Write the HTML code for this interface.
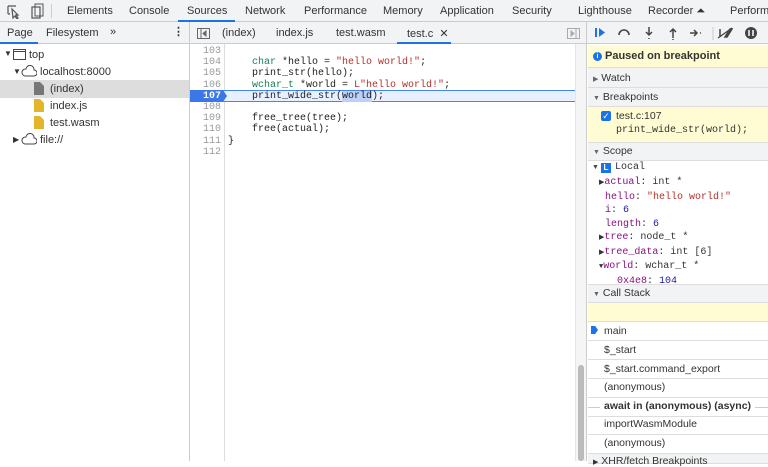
<!DOCTYPE html><html><head><style>
*{margin:0;padding:0;box-sizing:border-box}
body{width:768px;height:461px;overflow:hidden;background:#fff;font-family:"Liberation Sans",sans-serif;font-size:11px;color:#333;position:relative}
.a{position:absolute}
.mono{font-family:"Liberation Mono",monospace;font-size:10px}
.tab{position:absolute;top:5px;font-size:11px;color:#333}
.row{position:absolute;left:588px;width:180px;border-bottom:1px solid #ddd}
.hdr{background:#f1f3f4;color:#333}
.cs{position:absolute;left:604px;font-size:10.5px}
</style></head><body>
<div class="a" style="left:0;top:0;width:768px;height:22px;background:#f1f3f4;border-bottom:1px solid #ccc"></div>
<svg class="a" style="left:5px;top:3px" width="40" height="16"><path d="M3 3h8M3 3v8M3 11h2M7 6l6 6-2 0 2 3-1 1-2-3-2 2z" fill="none" stroke="#555" stroke-width="1.2"/><rect x="27" y="4" width="8" height="11" fill="none" stroke="#555" stroke-width="1.2"/><rect x="30" y="1" width="8" height="12" fill="none" stroke="#555" stroke-width="1"/></svg>
<div class="a" style="left:51px;top:4px;width:1px;height:14px;background:#ccc"></div>
<div class="tab" style="left:67px">Elements</div><div class="tab" style="left:129px">Console</div><div class="tab" style="left:187px">Sources</div><div class="tab" style="left:245px">Network</div><div class="tab" style="left:304px">Performance</div><div class="tab" style="left:383px">Memory</div><div class="tab" style="left:440px">Application</div><div class="tab" style="left:512px">Security</div><div class="tab" style="left:578px">Lighthouse</div><div class="tab" style="left:648px">Recorder ⏶</div><div class="tab" style="left:730px">Performa</div>
<div class="a" style="left:178px;top:20px;width:57px;height:2px;background:#1a73e8"></div>
<div class="a" style="left:0;top:22px;width:587px;height:22px;background:#f1f3f4;border-bottom:1px solid #ccc"></div>
<div class="tab" style="left:7px;top:27px">Page</div><div class="tab" style="left:46px;top:27px">Filesystem</div><div class="tab" style="left:110px;top:26px">»</div><div class="tab" style="left:173px;top:25px;font-weight:bold">⋮</div>
<div class="a" style="left:0;top:42px;width:38px;height:2px;background:#1a73e8"></div>
<div class="a" style="left:189px;top:22px;width:1px;height:439px;background:#ccc"></div>
<svg class="a" style="left:197px;top:28px" width="14" height="11"><rect x=".5" y=".5" width="12" height="10" fill="none" stroke="#666"/><path d="M4 1v9M9 3v5l-3-2.5z" stroke="#666" fill="#666"/></svg>
<div class="tab" style="left:222px;top:27px">(index)</div><div class="tab" style="left:276px;top:27px">index.js</div><div class="tab" style="left:336px;top:27px">test.wasm</div><div class="tab" style="left:407px;top:27px">test.c&nbsp; ✕</div>
<div class="a" style="left:397px;top:42px;width:54px;height:2px;background:#1a73e8"></div>
<svg class="a" style="left:567px;top:28px" width="13" height="11"><rect x=".5" y=".5" width="12" height="10" fill="none" stroke="#aaa"/><path d="M9 1v9M4 3v5l3-2.5z" stroke="#aaa" fill="#aaa"/></svg>
<div class="a" style="left:0;top:80px;width:189px;height:18px;background:#ddd"></div>
<div class="a" style="left:4px;top:49px;font-size:8px">▼</div><svg class="a" style="left:13px;top:49px" width="13" height="11"><rect x=".5" y=".5" width="12" height="10" fill="none" stroke="#444"/><path d="M1 2.5h11" stroke="#444"/></svg><div class="a" style="left:29px;top:49px">top</div>
<div class="a" style="left:13px;top:67px;font-size:8px">▼</div><svg class="a" style="left:21px;top:65px" width="16" height="12"><path d="M4 11h9a3 3 0 0 0 0-6 4 4 0 0 0-8-1 3.5 3.5 0 0 0-1 7z" fill="none" stroke="#444"/></svg><div class="a" style="left:40px;top:66px">localhost:8000</div>
<svg class="a" style="left:34px;top:82px" width="10" height="13"><path d="M0 0h6l4 4v9H0z" fill="#777"/></svg><div class="a" style="left:50px;top:83px">(index)</div>
<svg class="a" style="left:34px;top:99px" width="10" height="13"><path d="M0 0h6l4 4v9H0z" fill="#e3b52b"/></svg><div class="a" style="left:50px;top:100px">index.js</div>
<svg class="a" style="left:34px;top:116px" width="10" height="13"><path d="M0 0h6l4 4v9H0z" fill="#e3b52b"/></svg><div class="a" style="left:50px;top:117px">test.wasm</div>
<div class="a" style="left:13px;top:135px;font-size:8px">▶</div><svg class="a" style="left:21px;top:133px" width="16" height="12"><path d="M4 11h9a3 3 0 0 0 0-6 4 4 0 0 0-8-1 3.5 3.5 0 0 0-1 7z" fill="none" stroke="#444"/></svg><div class="a" style="left:40px;top:134px">file://</div>
<div class="a" style="left:224px;top:44px;width:1px;height:417px;background:#ddd"></div>
<div class="a" style="left:190px;top:90px;width:385px;height:12px;background:#e8f0fe;border-top:1px solid #4285f4;border-bottom:1px solid #4285f4"></div>
<svg class="a" style="left:190px;top:90px" width="40" height="12"><path d="M0 0h33l4 6-4 6H0z" fill="#3b78e7"/></svg>
<div class="a mono" style="left:190px;top:46px;width:31px;text-align:right;line-height:11.2px;color:#999">103<br>104<br>105<br>106<br><b style="color:#fff">107</b><br>108<br>109<br>110<br>111<br>112</div>
<div class="a mono" style="left:228px;top:46px;line-height:11.2px;color:#222;white-space:pre"> 
    <span style="color:#1a7f5a">char</span> *hello = <span style="color:#b3312a">"hello world!"</span>;
    print_str(hello);
    <span style="color:#1a7f5a">wchar_t</span> *world = <span style="color:#b3312a">L"hello world!"</span>;
    print_wide_str(<span style="background:#bcd1f5">world</span>);

    free_tree(tree);
    free(actual);
}</div>
<div class="a" style="left:575px;top:44px;width:12px;height:417px;background:#f5f5f5;border-left:1px solid #e5e5e5"></div>
<div class="a" style="left:578px;top:365px;width:6px;height:96px;background:#bbb;border-radius:3px"></div>
<div class="a" style="left:586px;top:22px;width:1px;height:439px;background:#ccc"></div>
<div class="a" style="left:587px;top:22px;width:181px;height:22px;background:#f1f3f4;border-bottom:1px solid #ccc"></div>
<svg class="a" style="left:594px;top:26px" width="170" height="14"><path d="M2 2v9" stroke="#1a73e8" stroke-width="2"/><path d="M5 2l6 4.5-6 4.5z" fill="#1a73e8"/><path d="M25 9a5 5 0 0 1 10 0" fill="none" stroke="#444" stroke-width="1.6"/><path d="M55 1v7M52 6l3 3 3-3M55 12v1" stroke="#444" stroke-width="1.5" fill="none"/><path d="M79 12V4M76 6l3-3 3 3M79 13v1" stroke="#444" stroke-width="1.5" fill="none"/><path d="M96 7h6M100 4l3 3-3 3M106 7h1" stroke="#444" stroke-width="1.5" fill="none"/><path d="M119 1v13" stroke="#ccc"/><path d="M126 3v8M131 11l5-8h2l-5 8z" stroke="#444" stroke-width="1.5" fill="#444"/><path d="M124 12l14-10" stroke="#444" stroke-width="1.3"/><circle cx="157" cy="7" r="6" fill="#444"/><path d="M155 4v6M159 4v6" stroke="#fff" stroke-width="1.5"/></svg>
<div class="row" style="top:45px;height:23px;background:#fffbd3;border-color:#e8e0a0"></div>
<div class="a" style="left:593px;top:52px;width:9px;height:9px;border-radius:50%;background:#1a73e8;color:#fff;font-size:7px;text-align:center;line-height:9px;font-weight:bold">i</div>
<div class="a" style="left:605px;top:50px;font-weight:bold;font-size:11px">Paused on breakpoint</div>
<div class="row hdr" style="top:68px;height:20px"></div><div class="a" style="left:593px;top:72px;font-size:10.5px"><span style="font-size:7px;color:#666">▶</span> Watch</div>
<div class="row hdr" style="top:88px;height:19px"></div><div class="a" style="left:593px;top:91px;font-size:10.5px"><span style="font-size:7px;color:#666">▼</span> Breakpoints</div>
<div class="row" style="top:107px;height:36px;background:#fffbd3"></div>
<div class="a" style="left:601px;top:111px;width:10px;height:10px;background:#1a73e8;border-radius:2px;color:#fff;font-size:9px;line-height:10px;text-align:center">✓</div>
<div class="a" style="left:616px;top:110px;font-size:10.5px">test.c:107</div>
<div class="a mono" style="left:616px;top:125px">print_wide_str(world);</div>
<div class="row hdr" style="top:143px;height:18px"></div><div class="a" style="left:593px;top:145px;font-size:10.5px"><span style="font-size:7px;color:#666">▼</span> Scope</div>
<div class="a" style="left:592px;top:164px;font-size:7px;color:#444">▼</div><div class="a" style="left:601px;top:163px;width:10px;height:10px;background:#1a73e8;color:#fff;font-size:8px;font-weight:bold;text-align:center;line-height:10px">L</div>
<div class="a mono" style="left:615px;top:162px">Local</div>
<div class="a mono" style="left:599px;top:176px;line-height:13.5px;white-space:pre"><span style="font-size:7px">▶</span><span style="color:#881280">actual</span>: int *
 <span style="color:#881280">hello</span>: <span style="color:#b3312a">"hello world!"</span>
 <span style="color:#881280">i</span>: <span style="color:#1a1aa6">6</span>
 <span style="color:#881280">length</span>: <span style="color:#1a1aa6">6</span>
<span style="font-size:7px">▶</span><span style="color:#881280">tree</span>: node_t *
<span style="font-size:7px">▶</span><span style="color:#881280">tree_data</span>: int [6]
<span style="font-size:7px">▼</span><span style="color:#881280">world</span>: wchar_t *
   <span style="color:#881280">0x4e8</span>: <span style="color:#1a1aa6">104</span></div>
<div class="row hdr" style="top:284px;height:19px;border-top:1px solid #ddd"></div><div class="a" style="left:593px;top:287px;font-size:10.5px"><span style="font-size:7px;color:#666">▼</span> Call Stack</div>
<div class="row" style="top:303px;height:19px;background:#fffbd3"></div>
<div class="row" style="top:322px;height:19px"></div><div class="a" style="left:591px;top:326px;width:7px;height:8px;background:#1a73e8;clip-path:polygon(0 0,60% 0,100% 50%,60% 100%,0 100%)"></div><div class="cs" style="top:325px">main</div>
<div class="row" style="top:341px;height:19px"></div><div class="cs" style="top:344px">$_start</div>
<div class="row" style="top:360px;height:19px"></div><div class="cs" style="top:363px">$_start.command_export</div>
<div class="row" style="top:379px;height:19px"></div><div class="cs" style="top:381px">(anonymous)</div>
<div class="a" style="left:588px;top:407px;width:180px;height:1px;background:#ccc"></div><div class="cs" style="top:400px;font-weight:bold;background:#fff;padding:0 4px;left:600px">await in (anonymous) (async)</div>
<div class="row" style="top:416px;height:19px;border-top:1px solid #ddd"></div><div class="cs" style="top:418px">importWasmModule</div>
<div class="row" style="top:435px;height:19px"></div><div class="cs" style="top:437px">(anonymous)</div>
<div class="row hdr" style="top:454px;height:10px"></div><div class="a" style="left:593px;top:455px;font-size:10.5px"><span style="font-size:7px">▶</span> XHR/fetch Breakpoints</div>
</body></html>
